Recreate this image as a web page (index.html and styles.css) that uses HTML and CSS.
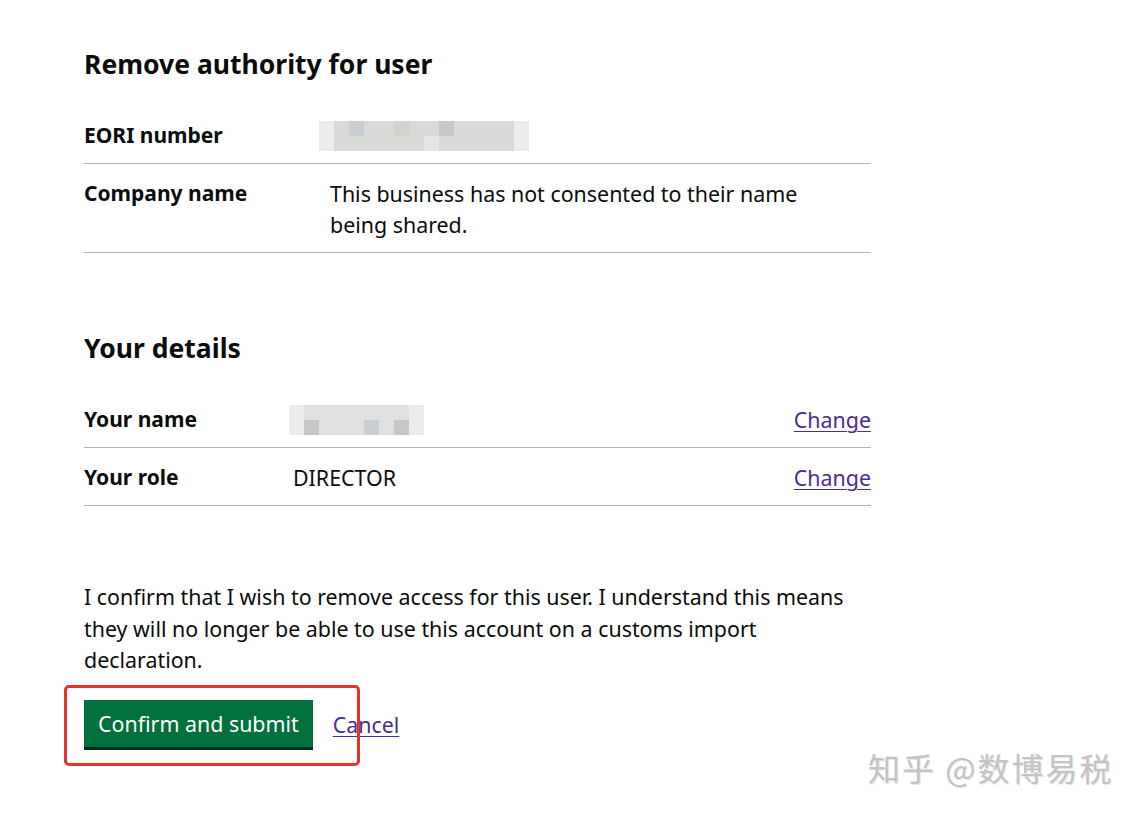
FILE: index.html
```html
<!DOCTYPE html>
<html lang="en">
<head>
    <meta charset="UTF-8">
    <meta name="viewport" content="width=device-width, initial-scale=1.0">
    <title>Remove authority for user</title>
    <link rel="stylesheet" href="styles.css">
</head>
<body>

<div class="page">
    <h1 class="heading">Remove authority for user</h1>

    <dl class="summary summary-eori">
        <div class="summary-row">
            <dt class="summary-key">EORI number</dt>
            <dd class="summary-value">
                <span class="blur blur-eori">
                    <i class="l"></i><i class="m"></i><i class="b"></i><i class="m"></i><i class="m"></i><i class="w"></i><i class="m"></i><i class="m"></i><i class="d"></i><i class="m"></i><i class="m"></i><i class="m"></i><i class="m"></i><i class="l"></i>
                    <i class="l"></i><i class="m"></i><i class="m"></i><i class="m"></i><i class="m"></i><i class="m"></i><i class="m"></i><i class="l2"></i><i class="m"></i><i class="m"></i><i class="m"></i><i class="m"></i><i class="m"></i><i class="l"></i>
                </span>
            </dd>
        </div>
        <div class="summary-row">
            <dt class="summary-key">Company name</dt>
            <dd class="summary-value">This business has not consented to their name being shared.</dd>
        </div>
    </dl>

    <h2 class="heading heading-details">Your details</h2>

    <dl class="summary summary-details">
        <div class="summary-row">
            <dt class="summary-key">Your name</dt>
            <dd class="summary-value">
                <span class="blur blur-name">
                    <i class="l"></i><i class="m"></i><i class="m"></i><i class="m"></i><i class="m"></i><i class="m"></i><i class="m"></i><i class="m"></i><i class="l"></i>
                    <i class="l"></i><i class="d"></i><i class="m"></i><i class="m"></i><i class="m"></i><i class="b"></i><i class="m"></i><i class="d"></i><i class="l"></i>
                </span>
            </dd>
            <dd class="summary-action"><a href="#" class="link">Change</a></dd>
        </div>
        <div class="summary-row">
            <dt class="summary-key">Your role</dt>
            <dd class="summary-value">DIRECTOR</dd>
            <dd class="summary-action"><a href="#" class="link">Change</a></dd>
        </div>
    </dl>

    <p class="body-text">I confirm that I wish to remove access for this user. I understand this means they will no longer be able to use this account on a customs import declaration.</p>

    <div class="actions">
        <button class="button" type="submit">Confirm and submit</button>
        <a href="#" class="link">Cancel</a>
        <div class="highlight"></div>
    </div>
</div>

<div class="watermark">知乎 @数博易税</div>

</body>
</html>
```

FILE: styles.css
```css
body {
    font-family: "Noto Sans", Arial, sans-serif;
    background: #fff;
    color: #0b0c0c;
    margin: 0;
    font-size: 21.4px;
    line-height: 31px;
}
.page {
    width: 787px;
    padding: 0 0 60px 84px;
}
.heading {
    font-size: 26.5px;
    line-height: 32px;
    font-weight: bold;
    margin: 48px 0 26px;
}
.heading-details {
    margin: 79px 0 26px;
}
.summary {
    margin: 0;
}
.summary-row {
    display: flex;
    border-bottom: 1px solid #b1b4b6;
    padding: 14px 0 12px;
}
.summary-key {
    font-weight: bold;
    font-size: 21px;
    margin: 0;
}
.summary-value {
    margin: 0;
    flex: 1;
}
.summary-eori .summary-key {
    width: 246px;
}
.summary-eori .summary-value {
    padding-right: 60px;
}
.summary-details .summary-key {
    width: 209px;
}
.summary-action {
    margin: 0;
    text-align: right;
}
.link {
    color: #4c2c92;
    text-decoration: underline;
    text-underline-offset: 3px;
    text-decoration-thickness: 1px;
}
.blur {
    display: inline-grid;
    grid-auto-rows: 15px;
    grid-template-columns: repeat(var(--cols), 15px);
    vertical-align: top;
    margin-top: 1px;
}
.blur-eori {
    --cols: 14;
    margin-left: -11px;
}
.blur-name {
    --cols: 9;
    margin-left: -4px;
}
.blur i { background: #dadada; }
.blur i.l { background: #ececec; }
.blur i.l2 { background: #e4e4e4; }
.blur i.m { background: #d9d9d8; }
.blur i.b { background: #c9ced3; }
.blur i.w { background: #d5d2ce; }
.blur i.d { background: #c6c7c8; }
.blur-name i.m { background: #e0e0e0; }
.blur-name i.l { background: #ebebeb; }
.body-text {
    margin: 75px 0 0;
    line-height: 31.5px;
}
.actions {
    position: relative;
    display: flex;
    align-items: center;
    margin-top: 24px;
}
.button {
    font-family: "Noto Sans", Arial, sans-serif;
    font-size: 21.4px;
    line-height: 25px;
    white-space: nowrap;
    color: #fff;
    background: #00703c;
    border: none;
    border-radius: 0;
    box-shadow: 0 3px 0 #002d18;
    padding: 11px 14px;
    margin: 0 20px 3px 0;
}
.highlight {
    position: absolute;
    left: -20px;
    top: -15px;
    bottom: -16px;
    width: 296px;
    box-sizing: border-box;
    border: 3px solid #e5322b;
    border-radius: 5px;
}
.watermark {
    position: absolute;
    left: 868px;
    top: 746px;
    font-family: "Noto Sans CJK SC", sans-serif;
    font-size: 32px;
    line-height: 42px;
    color: #c4c4c4;
    letter-spacing: 2px;
    text-shadow: 1px 1px 0 #e6e6e6;
}
```
